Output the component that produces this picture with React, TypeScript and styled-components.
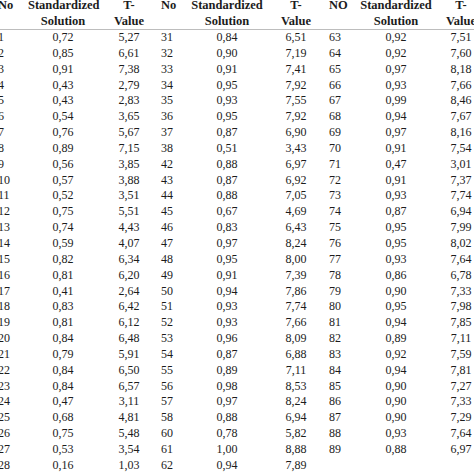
import styled, { createGlobalStyle } from "styled-components";

const GlobalStyle = createGlobalStyle`
  html, body {
    margin: 0;
    padding: 0;
    background: #ffffff;
    overflow: hidden;
  }
`;

const Page = styled.div`
  width: 474px;
  height: 474px;
  overflow: hidden;
  background: #ffffff;
`;

const Table = styled.table`
  margin: -2px 0 0 -3px;
  border-collapse: collapse;
  table-layout: fixed;
  width: 493px;
  font-family: "Liberation Serif", "Times New Roman", serif;
  font-size: 12px;
  color: #1c1c1c;
`;

const HeadCell = styled.th<{ $align?: "left" | "center" }>`
  padding: 0 0 0 ${(p) => (p.$align === "left" ? "1px" : "0")};
  text-align: ${(p) => p.$align ?? "center"};
  vertical-align: top;
  font-weight: 700;
  font-size: 12.5px;
  line-height: 15.5px;
  border-bottom: 1px solid #bdbdbd;
  white-space: nowrap;
`;

const Cell = styled.td<{ $align?: "left" | "center" }>`
  padding: 0 0 0 ${(p) => (p.$align === "left" ? "1px" : "0")};
  text-align: ${(p) => p.$align ?? "center"};
  line-height: 15.85px;
  height: 15.85px;
  white-space: nowrap;
`;

type Row = [string, string, string];

const left: Row[] = [
  ["1", "0,72", "5,27"], ["2", "0,85", "6,61"], ["3", "0,91", "7,38"],
  ["4", "0,43", "2,79"], ["5", "0,43", "2,83"], ["6", "0,54", "3,65"],
  ["7", "0,76", "5,67"], ["8", "0,89", "7,15"], ["9", "0,56", "3,85"],
  ["10", "0,57", "3,88"], ["11", "0,52", "3,51"], ["12", "0,75", "5,51"],
  ["13", "0,74", "4,43"], ["14", "0,59", "4,07"], ["15", "0,82", "6,34"],
  ["16", "0,81", "6,20"], ["17", "0,41", "2,64"], ["18", "0,83", "6,42"],
  ["19", "0,81", "6,12"], ["20", "0,84", "6,48"], ["21", "0,79", "5,91"],
  ["22", "0,84", "6,50"], ["23", "0,84", "6,57"], ["24", "0,47", "3,11"],
  ["25", "0,68", "4,81"], ["26", "0,75", "5,48"], ["27", "0,53", "3,54"],
  ["28", "0,16", "1,03"],
];

const middle: Row[] = [
  ["31", "0,84", "6,51"], ["32", "0,90", "7,19"], ["33", "0,91", "7,41"],
  ["34", "0,95", "7,92"], ["35", "0,93", "7,55"], ["36", "0,95", "7,92"],
  ["37", "0,87", "6,90"], ["38", "0,51", "3,43"], ["42", "0,88", "6,97"],
  ["43", "0,87", "6,92"], ["44", "0,88", "7,05"], ["45", "0,67", "4,69"],
  ["46", "0,83", "6,43"], ["47", "0,97", "8,24"], ["48", "0,95", "8,00"],
  ["49", "0,91", "7,39"], ["50", "0,94", "7,86"], ["51", "0,93", "7,74"],
  ["52", "0,93", "7,66"], ["53", "0,96", "8,09"], ["54", "0,87", "6,88"],
  ["55", "0,89", "7,11"], ["56", "0,98", "8,53"], ["57", "0,97", "8,24"],
  ["58", "0,88", "6,94"], ["60", "0,78", "5,82"], ["61", "1,00", "8,88"],
  ["62", "0,94", "7,89"],
];

const right: Row[] = [
  ["63", "0,92", "7,51"], ["64", "0,92", "7,60"], ["65", "0,97", "8,18"],
  ["66", "0,93", "7,66"], ["67", "0,99", "8,46"], ["68", "0,94", "7,67"],
  ["69", "0,97", "8,16"], ["70", "0,91", "7,54"], ["71", "0,47", "3,01"],
  ["72", "0,91", "7,37"], ["73", "0,93", "7,74"], ["74", "0,87", "6,94"],
  ["75", "0,95", "7,99"], ["76", "0,95", "8,02"], ["77", "0,93", "7,64"],
  ["78", "0,86", "6,78"], ["79", "0,90", "7,33"], ["80", "0,95", "7,98"],
  ["81", "0,94", "7,85"], ["82", "0,89", "7,11"], ["83", "0,92", "7,59"],
  ["84", "0,94", "7,81"], ["85", "0,90", "7,27"], ["86", "0,90", "7,33"],
  ["87", "0,90", "7,29"], ["88", "0,93", "7,64"], ["89", "0,88", "6,97"],
];

// column widths, the table starts 3px left of the visible edge
const widths = [31, 70, 62, 30, 74, 64, 32, 72, 58];

function Group({ row }: { row?: Row }) {
  return (
    <>
      <Cell $align="left">{row?.[0] ?? ""}</Cell>
      <Cell>{row?.[1] ?? ""}</Cell>
      <Cell>{row?.[2] ?? ""}</Cell>
    </>
  );
}

function HeadGroup({ no }: { no: string }) {
  return (
    <>
      <HeadCell $align="left">{no}</HeadCell>
      <HeadCell>
        Standardized
        <br />
        Solution
      </HeadCell>
      <HeadCell>
        T-
        <br />
        Value
      </HeadCell>
    </>
  );
}

export default function App() {
  return (
    <>
      <GlobalStyle />
      <Page>
        <Table>
          <colgroup>
            {widths.map((w, i) => (
              <col key={i} style={{ width: w }} />
            ))}
          </colgroup>
          <thead>
            <tr>
              <HeadGroup no="No" />
              <HeadGroup no="No" />
              <HeadGroup no="NO" />
            </tr>
          </thead>
          <tbody>
            {left.map((row, i) => (
              <tr key={row[0]}>
                <Group row={row} />
                <Group row={middle[i]} />
                <Group row={right[i]} />
              </tr>
            ))}
          </tbody>
        </Table>
      </Page>
    </>
  );
}
